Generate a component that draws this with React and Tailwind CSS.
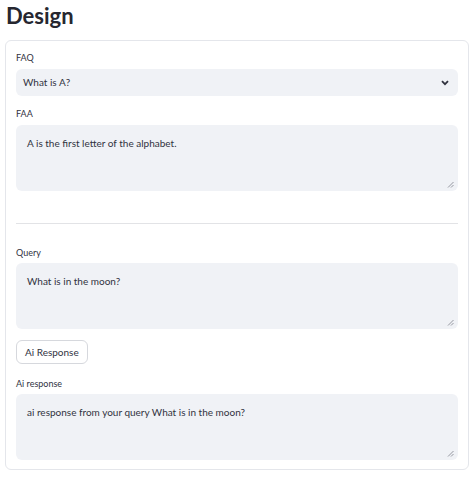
import React from 'react';

const font = { fontFamily: 'Lato, "Liberation Sans", sans-serif' };

const Grip = () => (
    <svg className="absolute right-[4px] bottom-[3px]" width="7" height="7" viewBox="0 0 7 7">
        <path d="M6.5 1 L1 6.5 M6.5 4 L4 6.5" stroke="#8a8d96" strokeWidth="0.9" fill="none" />
    </svg>
);

const Label = ({ children, className = '' }) => (
    <div className={`h-[14px] text-[9px] leading-[14px] text-[#31333f] ${className}`}>{children}</div>
);

const TextBox = ({ text }) => (
    <div className="relative h-[66px] rounded-[6px] bg-[#f0f2f6] px-[11px] pt-[11px] text-[10px] leading-[14px] text-[#31333f]">
        {text}
        <Grip />
    </div>
);

const App = () => {
    return (
        <div className="min-h-[479px] w-[474px] bg-white px-[5px]" style={font}>
            <h1 className="h-[40px] pl-[1px] pt-[2px] text-[22px] font-bold leading-[28px] text-[#262730]">Design</h1>
            <div className="rounded-[6px] border border-[#e4e6eb] px-[10px] pt-[10px] pb-[9px]">
                <Label className="mb-[4px]">FAQ</Label>
                <div className="flex h-[27px] items-center justify-between rounded-[6px] bg-[#f0f2f6] pl-[7px] pr-[9px] text-[10px] text-[#31333f]">
                    <span>What is A?</span>
                    <svg width="8" height="6" viewBox="0 0 8 6">
                        <path d="M1 1.2 L4 4.2 L7 1.2" stroke="#31333f" strokeWidth="1.8" fill="none" />
                    </svg>
                </div>
                <Label className="mt-[11px] mb-[4px]">FAA</Label>
                <TextBox text="A is the first letter of the alphabet." />
                <div className="mt-[32px] h-px bg-[#e2e3e6]" />
                <Label className="mt-[22px] mb-[3px]">Query</Label>
                <TextBox text="What is in the moon?" />
                <button className="mt-[11px] h-[24px] rounded-[6px] border border-[#d6d8dd] bg-white px-[8px] text-[10px] text-[#31333f]">
                    Ai Response
                </button>
                <Label className="mt-[13px] mb-[3px]">Ai response</Label>
                <TextBox text="ai response from your query What is in the moon?" />
            </div>
        </div>
    );
};

export default App;
